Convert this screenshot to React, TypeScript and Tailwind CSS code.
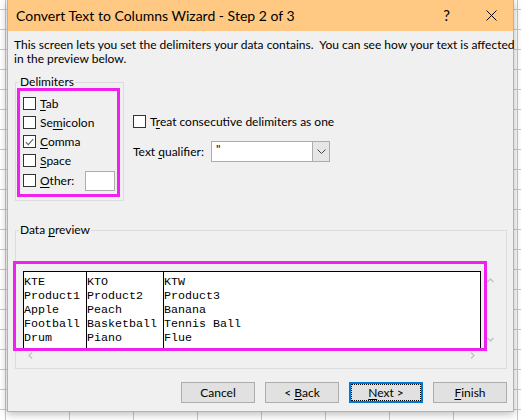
import React from 'react';

const rows = [
  ['KTE', 'KTO', 'KTW'],
  ['Product1', 'Product2', 'Product3'],
  ['Apple', 'Peach', 'Banana'],
  ['Football', 'Basketball', 'Tennis Ball'],
  ['Drum', 'Piano', 'Flue'],
];

function CheckBox({ checked }: { checked?: boolean }) {
  return (
    <span className="flex h-[13px] w-[13px] shrink-0 items-center justify-center border border-[#333333] bg-white">
      {checked && (
        <svg width="9" height="8" viewBox="0 0 9 8">
          <path d="M0.8 4.2 L3.3 6.6 L8.3 1" fill="none" stroke="#5a5a5a" strokeWidth="1.1" />
        </svg>
      )}
    </span>
  );
}

function Key({ children }: { children: React.ReactNode }) {
  return <span className="underline decoration-1 underline-offset-[2px]">{children}</span>;
}

function Chevron({ dir }: { dir: 'up' | 'down' | 'left' | 'right' }) {
  const paths = {
    up: 'M0.5 4 L3.5 1 L6.5 4',
    down: 'M0.5 1 L3.5 4 L6.5 1',
    left: 'M4 0.5 L1 3.5 L4 6.5',
    right: 'M1 0.5 L4 3.5 L1 6.5',
  };
  const vertical = dir === 'up' || dir === 'down';
  return (
    <svg width={vertical ? 7 : 5} height={vertical ? 5 : 7} viewBox={vertical ? '0 0 7 5' : '0 0 5 7'} className="block shrink-0">
      <path d={paths[dir]} fill="none" stroke="#c2c2c2" strokeWidth="1.3" />
    </svg>
  );
}

function Button({ children, focused }: { children: React.ReactNode; focused?: boolean }) {
  if (focused) {
    return (
      <div className="h-[21px] w-[74px] border-2 border-[#0078d7] bg-[#e1e1e1]">
        <div className="flex h-full w-full items-center justify-center border border-dotted border-black text-[12px] leading-none">
          <span className="whitespace-pre">{children}</span>
        </div>
      </div>
    );
  }
  return (
    <div className="flex h-[21px] w-[74px] items-center justify-center border border-[#adadad] bg-[#e1e1e1] text-[12px] leading-none">
      <span className="whitespace-pre">{children}</span>
    </div>
  );
}

export default function App() {
  return (
    <div className="relative h-[420px] w-[521px] overflow-hidden bg-white bg-[linear-gradient(to_right,#c8c8c8_1px,transparent_1px),linear-gradient(to_bottom,#c8c8c8_1px,transparent_1px)] bg-[size:64px_20px] bg-[position:5px_9px] font-['Lato',sans-serif] text-black">
      {/* wizard window on top of the sheet */}
      <div className="absolute left-[7px] top-0 flex h-[412px] w-[507px] flex-col border-x border-b border-[#eaa850] bg-[#f0f0f0] shadow-[0_2px_8px_rgba(0,0,0,0.28)]">
        {/* title bar */}
        <div className="flex h-[31px] shrink-0 items-center bg-[#ffc983] pl-[8px] pr-[16px]">
          <span className="text-[14px] leading-none">Convert Text to Columns Wizard - Step 2 of 3</span>
          <span className="ml-auto text-[15px] leading-none">?</span>
          <svg width="11" height="11" viewBox="0 0 11 11" className="ml-[36px]">
            <path d="M0.5 0.5 L10.5 10.5 M10.5 0.5 L0.5 10.5" stroke="#000" strokeWidth="1" />
          </svg>
        </div>

        <p className="ml-[6px] mt-[7px] whitespace-pre text-[12px] leading-[14px]">
          {'This screen lets you set the delimiters your data contains.  You can see how your text is affected\nin the preview below.'}
        </p>

        <div className="ml-[7px] mt-[10px] flex items-start text-[12px]">
          <fieldset className="w-[109px] border border-[#dcdcdc] pb-[3px]">
            <legend className="ml-[3px] px-[1px] leading-[12px]">Delimiters</legend>
            <div className="ml-[1px] h-[109px] w-[103px] border-[3px] border-[#f020f0] pl-[3px] pt-[3px]">
              <label className="flex h-[19px] items-center gap-[4px]">
                <CheckBox />
                <span><Key>T</Key>ab</span>
              </label>
              <label className="flex h-[19px] items-center gap-[4px]">
                <CheckBox />
                <span>Se<Key>m</Key>icolon</span>
              </label>
              <label className="flex h-[19px] items-center gap-[4px]">
                <CheckBox checked />
                <span><Key>C</Key>omma</span>
              </label>
              <label className="flex h-[19px] items-center gap-[4px]">
                <CheckBox />
                <span><Key>S</Key>pace</span>
              </label>
              <label className="flex h-[21px] items-center">
                <CheckBox />
                <span className="ml-[4px] w-[45px]"><Key>O</Key>ther:</span>
                <span className="h-[20px] w-[30px] border border-[#acacac] bg-white" />
              </label>
            </div>
          </fieldset>

          <div className="ml-[9px] flex flex-col pt-[36px]">
            <label className="flex h-[19px] items-center gap-[4px]">
              <CheckBox />
              <span>T<Key>r</Key>eat consecutive delimiters as one</span>
            </label>
            <div className="mt-[10px] flex h-[21px] items-center">
              <span className="w-[78px]">Text <Key>q</Key>ualifier:</span>
              <div className="flex h-[21px] w-[119px] border border-[#acacac] bg-white">
                <span className="pl-[4px] pt-[1px] leading-[12px]">"</span>
                <span className="ml-auto flex w-[17px] items-center justify-center border-l border-[#acacac] bg-[#e6e6e6]">
                  <svg width="9" height="5" viewBox="0 0 9 5">
                    <path d="M0.5 0.5 L4.5 4.5 L8.5 0.5" fill="none" stroke="#444" strokeWidth="1" />
                  </svg>
                </span>
              </div>
            </div>
          </div>
        </div>

        <fieldset className="ml-[7px] mr-[6px] mt-[23px] border border-[#dcdcdc] pb-[10px] text-[12px]">
          <legend className="ml-[3px] px-[1px] leading-[12px]">
            Data <Key>p</Key>review
          </legend>
          <div className="-ml-[3px] mt-[25px] flex">
            <div className="h-[90px] w-[474px] overflow-hidden border-[3px] border-[#f020f0] pl-[7px] pt-[7px]">
              <div className="flex h-[100px] w-[458px] border-x border-t border-black bg-white font-['Liberation_Mono','Courier_New',monospace] text-[11.667px] leading-[14px]">
                <div className="w-[62px] pt-[3px]">
                  {rows.map((r) => (
                    <div key={r[0]} className="whitespace-pre">{r[0]}</div>
                  ))}
                </div>
                <div className="w-[77px] border-l border-black pt-[3px]">
                  {rows.map((r) => (
                    <div key={r[1]} className="whitespace-pre">{r[1]}</div>
                  ))}
                </div>
                <div className="flex-1 border-l border-black pt-[3px]">
                  {rows.map((r) => (
                    <div key={r[2]} className="whitespace-pre">{r[2]}</div>
                  ))}
                </div>
              </div>
            </div>
            <div className="flex w-[7px] flex-col">
              <div className="mt-[17px]">
                <Chevron dir="up" />
              </div>
              <div className="mt-[54px]">
                <Chevron dir="down" />
              </div>
            </div>
          </div>
          <div className="mt-[1px] flex h-[6px] items-start pl-[12px]">
            <Chevron dir="left" />
            <div className="ml-[437px]">
              <Chevron dir="right" />
            </div>
          </div>
        </fieldset>

        <div className="mr-[6px] mt-[13px] flex justify-end gap-[10px]">
          <Button>Cancel</Button>
          <Button>
            {'< '}<Key>B</Key>ack
          </Button>
          <Button focused>
            <Key>N</Key>ext {'>'}
          </Button>
          <Button>
            <Key>F</Key>inish
          </Button>
        </div>
      </div>
    </div>
  );
}
